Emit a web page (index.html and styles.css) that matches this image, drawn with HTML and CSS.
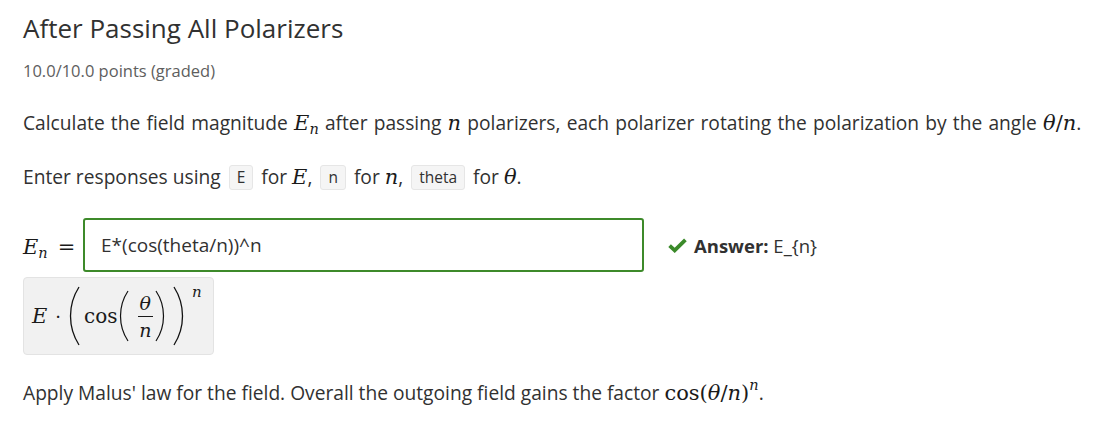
FILE: index.html
```html
<!DOCTYPE html>
<html>
<head>
<meta charset="utf-8">
<link rel="stylesheet" href="styles.css">
</head>
<body>
<div class="problem">
  <h3 class="title">After Passing All Polarizers</h3>
  <div class="points">10.0/10.0 points (graded)</div>
  <p class="text p1">Calculate the field magnitude <span class="m"><i>E</i><sub>n</sub></span> after passing <span class="m"><i>n</i></span> polarizers, each polarizer rotating the polarization by the angle <span class="m"><i>θ</i>/<i>n</i></span>.</p>
  <p class="text p2">Enter responses using <code class="chip">E</code> for <span class="m"><i>E</i></span>, <code class="chip">n</code> for <span class="m"><i>n</i></span>, <code class="chip">theta</code> for <span class="m"><i>θ</i></span>.</p>
  <div class="answer-row">
    <span class="label"><span class="m"><i>E</i><sub>n</sub></span><span class="m eq">=</span></span>
    <div class="input">E*(cos(theta/n))^n</div>
    <div class="status">
      <svg class="check" width="19" height="15" viewBox="0 0 19 15"><path d="M1.6 7.6 L6.7 12.4 L17.4 1.9" fill="none" stroke="#3b8a2a" stroke-width="3.8" stroke-linejoin="miter"/></svg>
      <b>Answer:</b>&nbsp;E_{n}
    </div>
  </div>
  <div class="preview m">
    <i class="pv-e">E</i><span class="dot">·</span>
    <svg class="paren" width="11" height="60" viewBox="0 0 11 60"><path d="M10 1 C3 12 1.5 22 1.5 30 C1.5 38 3 48 10 59" fill="none" stroke="#111" stroke-width="1.3"/></svg>
    <span class="cos">cos</span>
    <svg class="paren small" width="10" height="52" viewBox="0 0 10 52"><path d="M9 1 C3 10 1.5 19 1.5 26 C1.5 33 3 42 9 51" fill="none" stroke="#111" stroke-width="1.2"/></svg>
    <span class="frac"><i class="num">θ</i><i class="den">n</i></span>
    <svg class="paren small" width="10" height="52" viewBox="0 0 10 52"><path d="M1 1 C7 10 8.5 19 8.5 26 C8.5 33 7 42 1 51" fill="none" stroke="#111" stroke-width="1.2"/></svg>
    <svg class="paren outer-close" width="11" height="60" viewBox="0 0 11 60"><path d="M1 1 C8 12 9.5 22 9.5 30 C9.5 38 8 48 1 59" fill="none" stroke="#111" stroke-width="1.3"/></svg>
    <i class="sup">n</i>
  </div>
  <p class="text last">Apply Malus' law for the field. Overall the outgoing field gains the factor <span class="m">cos(<i>θ</i>/<i>n</i>)<sup>n</sup></span>.</p>
</div>
</body>
</html>
```
FILE: styles.css
```css
html, body { margin: 0; padding: 0; background: #fff; }
body {
  font-family: "Open Sans", "Noto Sans", sans-serif;
  color: #313131;
}
.problem { padding: 0 23px; }
.title {
  margin: 0;
  padding-top: 11px;
  font-size: 26px;
  font-weight: 400;
  line-height: 34px;
  color: #313131;
}
.points {
  margin-top: 15px;
  font-size: 16.5px;
  line-height: 22px;
  color: #5e5e5e;
}
.text {
  margin: 0;
  font-size: 19.2px;
  line-height: 30px;
}
.p1 { margin-top: 26px; word-spacing: 1.2px; }
.p2 { margin-top: 24px; }
.m {
  font-family: "DejaVu Serif", "Liberation Serif", serif;
  font-size: 21px;
  color: #1a1a1a;
  word-spacing: 0;
}
.m i { font-style: italic; }
.m sub { font-size: 14.5px; font-style: italic; vertical-align: -4px; line-height: 0; }
.m sup { font-size: 14.5px; font-style: italic; vertical-align: 10px; line-height: 0; }
.chip {
  display: inline-block;
  font-family: "Open Sans", sans-serif;
  font-size: 15.5px;
  line-height: 23px;
  padding: 0 7px;
  margin: 0 3px;
  background: #f5f5f5;
  border: 1px solid #e6e6e6;
  border-radius: 3px;
  color: #313131;
  vertical-align: 1px;
}
.answer-row {
  display: flex;
  align-items: center;
  margin-top: 26px;
}
.label { width: 60px; display: flex; align-items: baseline; padding-top: 4px; }
.label .eq { margin-left: 10px; }
.input {
  box-sizing: border-box;
  width: 561px;
  height: 54px;
  border: 2px solid #3d8a2a;
  border-radius: 3px;
  padding: 0 16px;
  display: flex;
  align-items: center;
  font-size: 19px;
  color: #313131;
}
.status {
  display: flex;
  align-items: center;
  margin-left: 24px;
  font-size: 18.5px;
  color: #313131;
}
.status b { font-weight: 700; }
.check { margin-right: 7px; }
.preview {
  box-sizing: border-box;
  display: flex;
  align-items: center;
  width: 191px;
  height: 78px;
  margin-top: 5px;
  padding-left: 8px;
  background: #f1f1f1;
  border: 1px solid #e3e3e3;
  border-radius: 4px;
}
.pv-e { font-size: 21px; }
.dot { margin: 0 8px 0 8px; font-size: 18px; }
.paren { flex: none; }
.cos { margin: 0 0 0 4px; font-size: 20px; }
.paren.small { margin: 0 1px; }
.frac {
  display: inline-flex;
  flex-direction: column;
  align-items: center;
  margin: 0 1px 0 8px;
  font-size: 19px;
  line-height: 20px;
}
.frac .num { border-bottom: 1.2px solid #1a1a1a; padding: 0 2px 3px; }
.frac .den { padding-top: 3px; }
.outer-close { margin-left: 7px; }
.sup { align-self: flex-start; margin-top: 5px; margin-left: 8px; font-size: 15px; }
.last { margin-top: 23px; }
```
